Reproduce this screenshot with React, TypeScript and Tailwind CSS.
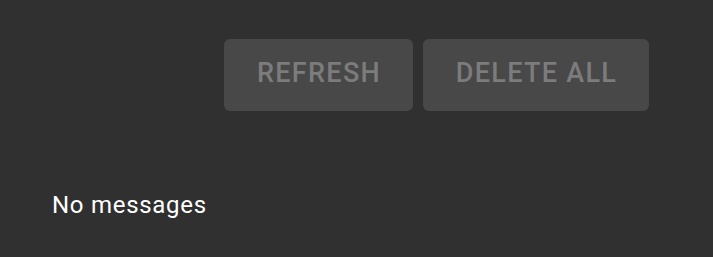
export default function App() {
  return (
    <div className="w-[713px] h-[257px] bg-[#303030] overflow-hidden" style={{ fontFamily: "Roboto, sans-serif" }}>
      <div className="flex justify-end gap-[10px] pt-[39px] pr-[64px]">
        <button className="w-[189px] h-[72px] pb-[4px] pl-[1px] rounded-[6px] bg-[#484848] text-[#7c7c7c] text-[27px] leading-none font-medium uppercase tracking-[1.3px]">
          Refresh
        </button>
        <button className="w-[226px] h-[72px] pb-[4px] pl-[1px] rounded-[6px] bg-[#484848] text-[#7c7c7c] text-[27px] leading-none font-medium uppercase tracking-[1.3px]">
          Delete all
        </button>
      </div>
      <div className="pl-[52px] pt-[78px] text-white text-[24px] leading-[32px] tracking-[0.03em]">
        No messages
      </div>
    </div>
  );
}
